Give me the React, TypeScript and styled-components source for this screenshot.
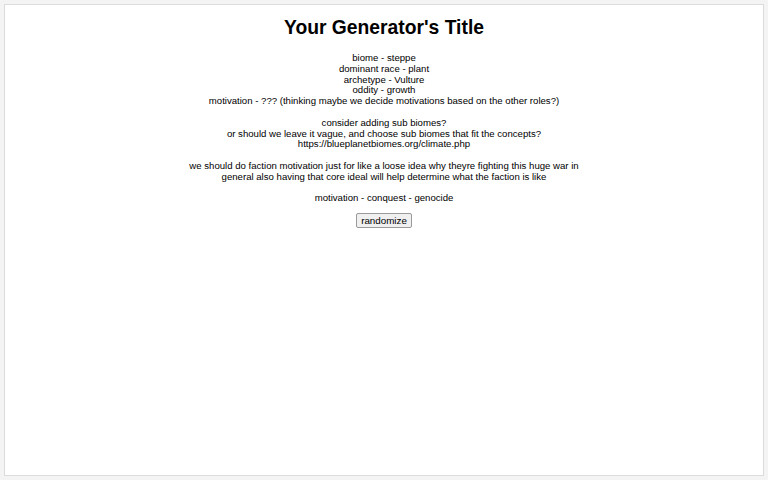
import React from "react";
import styled, { createGlobalStyle } from "styled-components";

const Global = createGlobalStyle`
  html, body { margin: 0; padding: 0; background: #f4f4f4; }
  body { font-family: "Liberation Sans", Arial, sans-serif; color: #000; }
`;

const Page = styled.div`
  padding: 4px;
  height: 480px;
  box-sizing: border-box;
  display: flex;
`;

const Card = styled.div`
  flex: 1;
  background: #fff;
  border: 1px solid #dcdcdc;
  display: flex;
  flex-direction: column;
  align-items: center;
  padding-top: 11px;
`;

const Title = styled.h1`
  margin: 0 0 13px 0;
  font-size: 19.3px;
  font-weight: bold;
  line-height: 24px;
`;

const Body = styled.div`
  font-size: 9.6px;
  line-height: 10.8px;
  text-align: center;
  width: 400px;
`;

const Para = styled.p<{ $last?: boolean }>`
  margin: 0 0 ${(p) => (p.$last ? "9px" : "10.8px")} 0;
`;

const Button = styled.button`
  font-family: "Liberation Sans", Arial, sans-serif;
  font-size: 9.8px;
  line-height: 11px;
  padding: 1px 4px;
  background: #f0f0f0;
  border: 1px solid #9a9a9a;
  border-radius: 2px;
  color: #000;
`;

export default function App() {
  return (
    <>
      <Global />
      <Page>
        <Card>
          <Title>Your Generator's Title</Title>
          <Body>
            <Para>
              biome - steppe<br />
              dominant race - plant<br />
              archetype - Vulture<br />
              oddity - growth<br />
              motivation - ??? (thinking maybe we decide motivations based on the other roles?)
            </Para>
            <Para>
              consider adding sub biomes?<br />
              or should we leave it vague, and choose sub biomes that fit the concepts?<br />
              https://blueplanetbiomes.org/climate.php
            </Para>
            <Para>
              we should do faction motivation just for like a loose idea why theyre fighting this huge war in general also having that core ideal will help determine what the faction is like
            </Para>
            <Para $last>motivation - conquest - genocide</Para>
          </Body>
          <Button>randomize</Button>
        </Card>
      </Page>
    </>
  );
}
